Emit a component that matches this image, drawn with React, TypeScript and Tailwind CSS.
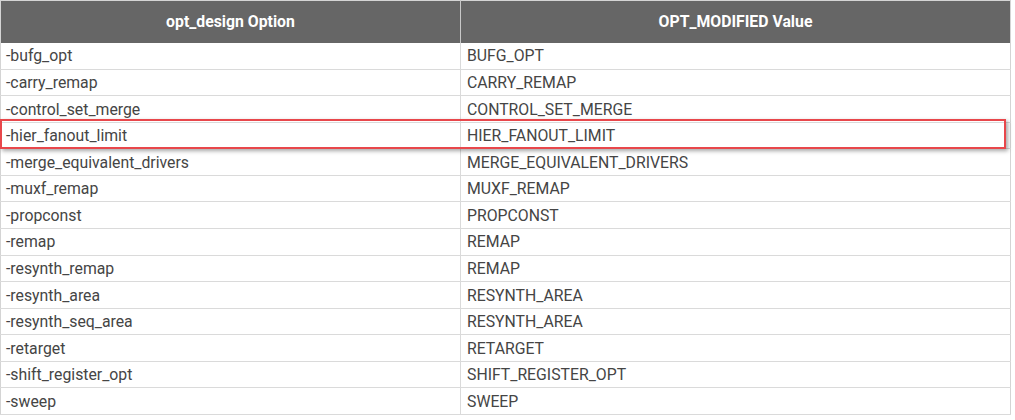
const rows: [string, string][] = [
  ["-bufg_opt", "BUFG_OPT"],
  ["-carry_remap", "CARRY_REMAP"],
  ["-control_set_merge", "CONTROL_SET_MERGE"],
  ["-hier_fanout_limit", "HIER_FANOUT_LIMIT"],
  ["-merge_equivalent_drivers", "MERGE_EQUIVALENT_DRIVERS"],
  ["-muxf_remap", "MUXF_REMAP"],
  ["-propconst", "PROPCONST"],
  ["-remap", "REMAP"],
  ["-resynth_remap", "REMAP"],
  ["-resynth_area", "RESYNTH_AREA"],
  ["-resynth_seq_area", "RESYNTH_AREA"],
  ["-retarget", "RETARGET"],
  ["-shift_register_opt", "SHIFT_REGISTER_OPT"],
  ["-sweep", "SWEEP"],
];

export default function App() {
  return (
    <div className="h-[420px] w-[1015px] bg-white font-['Roboto',sans-serif]">
      <div className="relative w-[1011px]">
        <table className="w-full table-fixed border-collapse border border-[#d4d4d4] text-[15.8px]">
          <colgroup>
            <col className="w-[460px]" />
            <col />
          </colgroup>
          <thead>
            <tr className="h-[42px] bg-[#666666] text-white">
              <th className="border-r border-[#c8c8c8] font-bold">opt_design Option</th>
              <th className="font-bold">OPT_MODIFIED Value</th>
            </tr>
          </thead>
          <tbody className="text-[#454545]">
            {rows.map(([opt, value]) => (
              <tr key={opt} className="h-[26.57px] border-b border-[#dadada]">
                <td className="border-r border-[#dadada] pl-[5px] pt-[1px]">{opt}</td>
                <td className="pl-[6px] pt-[1px]">{value}</td>
              </tr>
            ))}
          </tbody>
        </table>
        <div className="pointer-events-none absolute left-0 top-[119px] h-[30px] w-[1006px] border-[2.5px] border-[#e8474b] shadow-[2px_2px_4px_rgba(0,0,0,0.35)]" />
      </div>
    </div>
  );
}
